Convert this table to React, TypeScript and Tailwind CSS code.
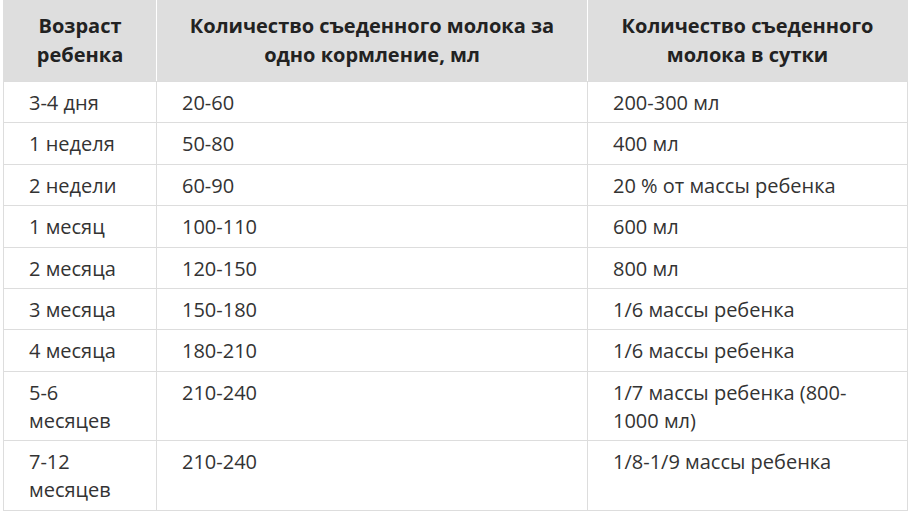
const rows: [string, string, string][] = [
  ["3-4 дня", "20-60", "200-300 мл"],
  ["1 неделя", "50-80", "400 мл"],
  ["2 недели", "60-90", "20 % от массы ребенка"],
  ["1 месяц", "100-110", "600 мл"],
  ["2 месяца", "120-150", "800 мл"],
  ["3 месяца", "150-180", "1/6 массы ребенка"],
  ["4 месяца", "180-210", "1/6 массы ребенка"],
  ["5-6 месяцев", "210-240", "1/7 массы ребенка (800-1000 мл)"],
  ["7-12 месяцев", "210-240", "1/8-1/9 массы ребенка"],
];

export default function App() {
  return (
    <div className="w-[909px] h-[515px] bg-white pl-[3px] font-['Open_Sans',sans-serif] overflow-hidden">
      <table className="w-[904px] border-collapse table-fixed text-[20px]">
        <colgroup>
          <col className="w-[153px]" />
          <col className="w-[431px]" />
          <col className="w-[320px]" />
        </colgroup>
        <thead>
          <tr className="bg-[#dedede] text-[#222]">
            <th className="border border-t-0 border-l-[#dedede] border-r-white border-b-[#dddddd] px-[25px] pt-[12px] pb-[12px] leading-[28.5px] font-bold text-center">
              Возраст ребенка
            </th>
            <th className="border border-t-0 border-white border-b-[#dddddd] px-[25px] pt-[12px] pb-[12px] leading-[28.5px] font-bold text-center">
              Количество съеденного молока за одно кормление, мл
            </th>
            <th className="border border-t-0 border-l-white border-r-[#dedede] border-b-[#dddddd] px-[25px] pt-[12px] pb-[12px] leading-[28.5px] font-bold text-center">
              Количество съеденного молока в сутки
            </th>
          </tr>
        </thead>
        <tbody className="text-[#333]">
          {rows.map((r) => (
            <tr key={r[0]}>
              {r.map((c, i) => (
                <td
                  key={i}
                  className="border border-[#dddddd] pl-[25px] pr-[24px] pt-[7px] pb-[5.4px] leading-[28px] align-top"
                >
                  {c}
                </td>
              ))}
            </tr>
          ))}
        </tbody>
      </table>
    </div>
  );
}
